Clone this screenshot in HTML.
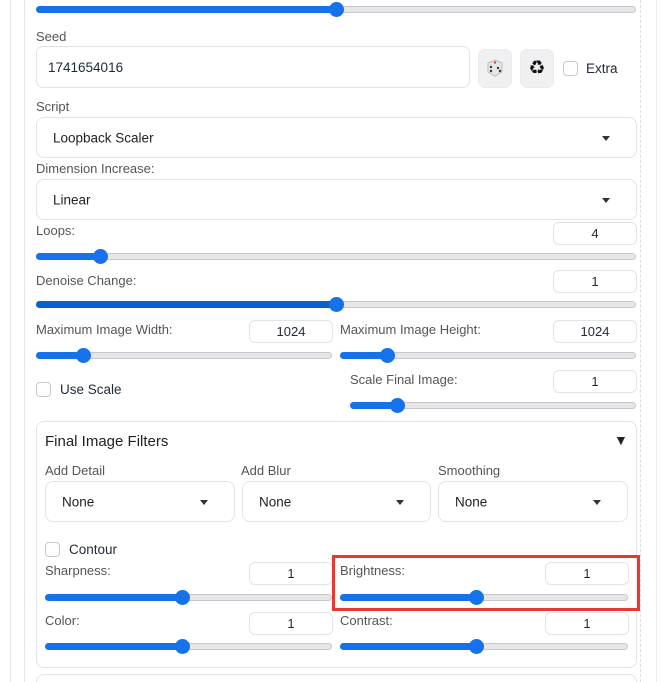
<!DOCTYPE html>
<html><head><meta charset="utf-8"><style>
*{box-sizing:border-box;margin:0;padding:0}
html,body{width:661px;height:682px;overflow:hidden}
body{background:#fff;position:relative;font-family:"Liberation Sans",sans-serif;color:#1f2937}
.a{position:absolute}
.lbl{position:absolute;font-size:13px;color:#555;line-height:16px;white-space:nowrap}
.box{position:absolute;border:1px solid #e3e3e6;border-radius:7px;background:#fff}
.num{position:absolute;border:1px solid #e3e3e6;border-radius:6px;background:#fff;font-size:13px;text-align:center;line-height:21px;height:23px}
.sel{position:absolute;border:1px solid #e3e3e6;border-radius:8px;background:#fff;font-size:13.5px;color:#222}
.sel span{position:absolute;left:16px;top:50%;transform:translateY(-50%)}
.sel i{position:absolute;right:26px;top:50%;margin-top:-2px;border-left:4px solid transparent;border-right:4px solid transparent;border-top:5px solid #333}
.tr{position:absolute;height:7px;border:1px solid #c8c8cc;background:#e6e6e9;border-radius:4px}
.fl{position:absolute;height:7px;background:#1672ea;border-radius:4px}
.th{position:absolute;width:15px;height:15px;border-radius:50%;background:#1672ea}
.cb{position:absolute;width:15px;height:15px;border:1px solid #c8c8cc;border-radius:4px;background:#fff}
</style></head><body>
<div class="a" style="left:10px;top:0;width:1px;height:682px;background:#e8e8ea"></div>
<div class="a" style="left:24px;top:0;width:1px;height:682px;background:#e8e8ea"></div>
<div class="a" style="left:640px;top:0;width:0;height:682px;border-left:1px dashed #ddd"></div>
<div class="a" style="left:656px;top:0;width:1px;height:682px;background:#eee"></div>

<div class="lbl" style="left:36px;top:29px">Seed</div>
<div class="box" style="left:36px;top:46px;width:434px;height:42px"><span class="a" style="left:11px;top:13px;font-size:13.5px">1741654016</span></div>
<div class="box" style="left:478px;top:49px;width:34px;height:39px;background:#f0f0f2;border-color:#ebebed"></div>
<svg class="a" style="left:486px;top:58px" width="18" height="20" viewBox="0 0 18 20"><path d="M9 2L16 5V14L9 18L2 14V5Z" fill="#e6e6e6" stroke="#bbb"/><circle cx="9" cy="4.5" r="1.2" fill="#e33"/><circle cx="5" cy="9" r="1.2" fill="#333"/><circle cx="5" cy="13" r="1.2" fill="#333"/><circle cx="12" cy="10" r="1.2" fill="#333"/><circle cx="14" cy="13" r="1.2" fill="#333"/></svg>
<div class="box" style="left:520px;top:49px;width:34px;height:39px;background:#f0f0f2;border-color:#ebebed"></div>
<div class="a" style="left:526px;top:56px;width:22px;text-align:center;font-family:'DejaVu Sans',sans-serif;font-size:19px;font-weight:bold;color:#111;line-height:24px">♻</div>
<div class="cb" style="left:563px;top:61px"></div>
<div class="a" style="left:586px;top:61px;font-size:13.5px">Extra</div>

<div class="lbl" style="left:36px;top:99px">Script</div>
<div class="sel" style="left:36px;top:117px;width:601px;height:41px"><span>Loopback Scaler</span><i></i></div>
<div class="lbl" style="left:36px;top:161px">Dimension Increase:</div>
<div class="sel" style="left:36px;top:179px;width:601px;height:41px"><span>Linear</span><i></i></div>

<div class="lbl" style="left:36px;top:223px">Loops:</div>
<div class="num" style="left:553px;top:222px;width:84px">4</div>
<div class="lbl" style="left:36px;top:273px">Denoise Change:</div>
<div class="num" style="left:553px;top:270px;width:84px">1</div>
<div class="lbl" style="left:36px;top:322px">Maximum Image Width:</div>
<div class="num" style="left:249px;top:320px;width:84px">1024</div>
<div class="lbl" style="left:340px;top:322px">Maximum Image Height:</div>
<div class="num" style="left:553px;top:320px;width:84px">1024</div>
<div class="cb" style="left:36px;top:382px"></div>
<div class="a" style="left:60px;top:382px;font-size:13.5px">Use Scale</div>
<div class="lbl" style="left:350px;top:372px">Scale Final Image:</div>
<div class="num" style="left:553px;top:370px;width:84px">1</div>

<div class="box" style="left:36px;top:421px;width:601px;height:247px;border-radius:8px"></div>
<div class="a" style="left:45px;top:433px;font-size:15px;color:#222">Final Image Filters</div>
<div class="a" style="left:614px;top:432px;font-size:14px;color:#222">▼</div>
<div class="lbl" style="left:45px;top:463px">Add Detail</div>
<div class="lbl" style="left:241px;top:463px">Add Blur</div>
<div class="lbl" style="left:438px;top:463px">Smoothing</div>
<div class="sel" style="left:45px;top:481px;width:190px;height:41px"><span>None</span><i></i></div>
<div class="sel" style="left:242px;top:481px;width:189px;height:41px"><span>None</span><i></i></div>
<div class="sel" style="left:438px;top:481px;width:190px;height:41px"><span>None</span><i></i></div>
<div class="cb" style="left:45px;top:542px"></div>
<div class="a" style="left:69px;top:542px;font-size:13.5px">Contour</div>
<div class="lbl" style="left:45px;top:563px">Sharpness:</div>
<div class="num" style="left:249px;top:562px;width:84px">1</div>
<div class="lbl" style="left:340px;top:563px">Brightness:</div>
<div class="num" style="left:545px;top:562px;width:84px">1</div>
<div class="lbl" style="left:45px;top:613px">Color:</div>
<div class="num" style="left:249px;top:612px;width:84px">1</div>
<div class="lbl" style="left:340px;top:613px">Contrast:</div>
<div class="num" style="left:545px;top:612px;width:84px">1</div>
<div class="box" style="left:36px;top:674px;width:601px;height:8px;border-bottom:none;border-radius:8px 8px 0 0"></div>

<div id="s"></div>
<div class="a" style="left:332px;top:555px;width:308px;height:56px;border:3px solid #e8382f"></div>

<script>
var S=[[36,636,9,336],[36,636,256,100],[36,636,304,336],[36,332,355,83],[340,636,355,387],[350,636,405,397],[45,332,597,182],[340,628,597,476],[45,332,646,182],[340,628,646,476]];
var h='';S.forEach(function(s,i){var c=i==2?'#0b5fcc':'#1672ea';
h+='<div class="tr" style="left:'+s[0]+'px;top:'+(s[2]-3)+'px;width:'+(s[1]-s[0])+'px"></div>';
h+='<div class="fl" style="left:'+s[0]+'px;top:'+(s[2]-3)+'px;width:'+(s[3]-s[0])+'px;background:'+c+'"></div>';
h+='<div class="th" style="left:'+(s[3]-7)+'px;top:'+(s[2]-7)+'px"></div>';});
document.getElementById('s').innerHTML=h;
</script>
</body></html>
